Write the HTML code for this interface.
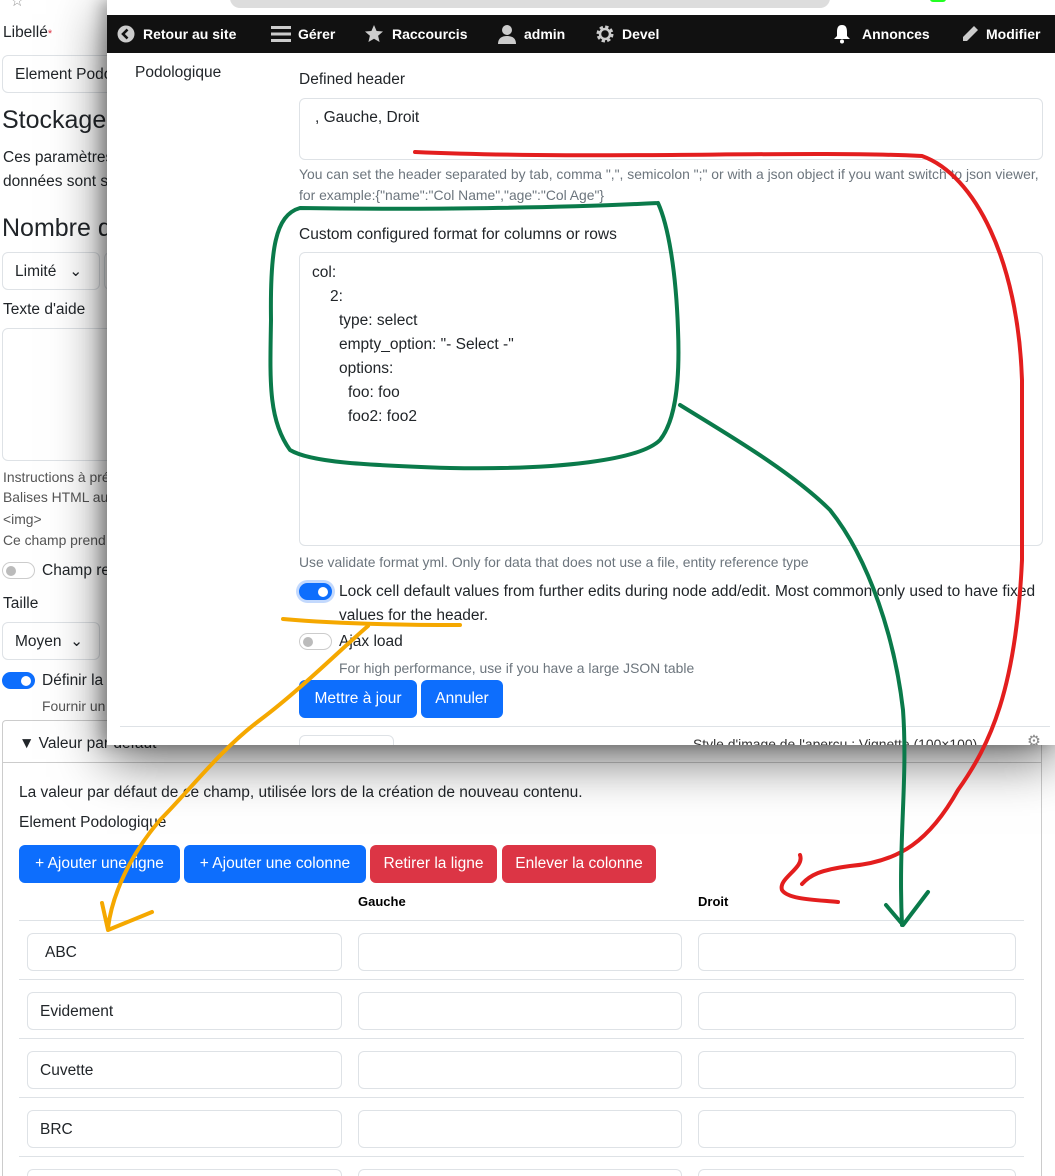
<!DOCTYPE html>
<html style="overflow:hidden;width:1055px;height:1176px"><head><meta charset="utf-8"><style>
*{box-sizing:border-box}
body{margin:0;width:1055px;height:1176px;overflow:hidden;background:#fff;font-family:"Liberation Sans",sans-serif;color:#212529;position:relative}
.t{position:absolute;white-space:nowrap;line-height:1;font-size:15.5px}
.s{font-size:13.9px;color:#6c757d}
.box{position:absolute;border:1px solid #dee2e6;border-radius:6px;background:#fff}
.lb{border-bottom:none;border-radius:6px 6px 0 0;height:7px}
.btn{position:absolute;color:#fff;border-radius:6px;font-size:15.5px;display:flex;align-items:center;justify-content:center;white-space:nowrap}
.blue{background:#0d6efd}.red{background:#dc3545}
.tg{position:absolute;width:33px;height:17px;border-radius:9px;border:1px solid #ccc;background:#fff}
.tg::after{content:"";position:absolute;left:3px;top:3px;width:10px;height:10px;border-radius:50%;background:#bbb}
.tg.on{background:#0d6efd;border-color:#0d6efd}
.tg.on::after{left:auto;right:3px;background:#fff}
.hr{position:absolute;height:1px;background:#dee2e6}
#ov{position:absolute;left:107px;top:0;width:948px;height:745px;background:#fff;box-shadow:0 14px 50px rgba(0,0,0,.6),-6px 0 14px rgba(0,0,0,.25);overflow:hidden}
.tb{position:absolute;top:15px;height:38px;left:0;right:0;background:#111}
.tb span{position:absolute;top:12px;color:#fff;font-weight:bold;font-size:14px;line-height:1;white-space:nowrap}
</style></head><body>
<div class="t" style="left:10px;top:-6px;color:#999;font-size:16px">☆</div>
<div class="t" style="left:3px;top:25px">Libellé<span style="color:#dc3545;font-size:11px">*</span></div>
<div class="box" style="left:2px;top:55px;width:140px;height:38px"></div>
<div class="t" style="left:15px;top:67px">Element Podo</div>
<div class="t" style="left:2px;top:108px;font-size:25px">Stockage c</div>
<div class="t" style="left:3px;top:150px">Ces paramètres</div>
<div class="t" style="left:3px;top:174px">données sont s</div>
<div class="t" style="left:2px;top:216px;font-size:25px">Nombre d</div>
<div class="box" style="left:2px;top:252px;width:98px;height:38px"></div>
<div class="t" style="left:15px;top:264px">Limité &nbsp;&nbsp;⌄</div>
<div class="box" style="left:104px;top:252px;width:20px;height:38px"></div>
<div class="t" style="left:3px;top:302px">Texte d'aide</div>
<div class="box" style="left:2px;top:328px;width:140px;height:133px"></div>
<div class="t s" style="left:3px;top:471px;color:#555">Instructions à pré</div>
<div class="t s" style="left:3px;top:491px;color:#555">Balises HTML aut</div>
<div class="t s" style="left:3px;top:513px;color:#555">&lt;img&gt;</div>
<div class="t s" style="left:3px;top:534px;color:#555">Ce champ prend</div>
<div class="tg" style="left:2px;top:562px"></div>
<div class="t" style="left:42px;top:563px">Champ re</div>
<div class="t" style="left:3px;top:596px">Taille</div>
<div class="box" style="left:2px;top:622px;width:98px;height:38px"></div>
<div class="t" style="left:15px;top:634px">Moyen &nbsp;⌄</div>
<div class="tg on" style="left:2px;top:672px"></div>
<div class="t" style="left:42px;top:673px">Définir la</div>
<div class="t s" style="left:42px;top:700px;color:#555">Fournir un</div>
<div style="position:absolute;left:2px;top:720px;width:1040px;height:456px;border:1px solid #ccc;border-bottom:none;border-radius:4px 4px 0 0"></div>
<div class="hr" style="left:3px;top:762px;width:1038px;background:#ccc"></div>
<div class="t" style="left:19px;top:736px">▼ Valeur par défaut</div>
<div class="t" style="left:19px;top:785px">La valeur par défaut de ce champ, utilisée lors de la création de nouveau contenu.</div>
<div class="t" style="left:19px;top:815px">Element Podologique</div>
<div class="btn blue" style="left:19px;top:845px;width:161px;height:38px">+ Ajouter une ligne</div>
<div class="btn blue" style="left:184px;top:845px;width:182px;height:38px">+ Ajouter une colonne</div>
<div class="btn red" style="left:370px;top:845px;width:127px;height:38px">Retirer la ligne</div>
<div class="btn red" style="left:502px;top:845px;width:154px;height:38px">Enlever la colonne</div>
<div class="t" style="left:358px;top:895px;font-size:13px;font-weight:bold;color:#000">Gauche</div>
<div class="t" style="left:698px;top:895px;font-size:13px;font-weight:bold;color:#000">Droit</div>
<div class="hr" style="left:19px;top:920px;width:1005px"></div>
<div class="box" style="left:27px;top:933px;width:315px;height:38px"></div><div class="box" style="left:358px;top:933px;width:324px;height:38px"></div><div class="box" style="left:698px;top:933px;width:318px;height:38px"></div>
<div class="t" style="left:45px;top:945px">ABC</div>
<div class="hr" style="left:19px;top:979px;width:1005px"></div>
<div class="box" style="left:27px;top:992px;width:315px;height:38px"></div><div class="box" style="left:358px;top:992px;width:324px;height:38px"></div><div class="box" style="left:698px;top:992px;width:318px;height:38px"></div>
<div class="t" style="left:40px;top:1004px">Evidement</div>
<div class="hr" style="left:19px;top:1038px;width:1005px"></div>
<div class="box" style="left:27px;top:1051px;width:315px;height:38px"></div><div class="box" style="left:358px;top:1051px;width:324px;height:38px"></div><div class="box" style="left:698px;top:1051px;width:318px;height:38px"></div>
<div class="t" style="left:40px;top:1063px">Cuvette</div>
<div class="hr" style="left:19px;top:1097px;width:1005px"></div>
<div class="box" style="left:27px;top:1110px;width:315px;height:38px"></div><div class="box" style="left:358px;top:1110px;width:324px;height:38px"></div><div class="box" style="left:698px;top:1110px;width:318px;height:38px"></div>
<div class="t" style="left:40px;top:1122px">BRC</div>
<div class="hr" style="left:19px;top:1156px;width:1005px"></div>
<div class="box lb" style="left:27px;top:1169px;width:315px"></div><div class="box lb" style="left:358px;top:1169px;width:324px"></div><div class="box lb" style="left:698px;top:1169px;width:318px"></div>

<div id="ov">
<div style="position:absolute;left:123px;top:-12px;width:600px;height:20px;border-radius:10px;background:#ddd"></div>
<div style="position:absolute;left:823px;top:-4px;width:16px;height:6px;border-radius:3px;background:#2f2"></div>
<div class="tb">
<svg style="position:absolute;left:10px;top:10px" width="18" height="18" viewBox="0 0 18 18"><circle cx="9" cy="9" r="8.5" fill="#ccc"/><path d="M10.5 4.5L6 9l4.5 4.5" stroke="#111" stroke-width="2.6" fill="none"/></svg>
<span style="left:36px">Retour au site</span>
<svg style="position:absolute;left:164px;top:10px" width="20" height="18"><rect y="1" width="20" height="3" fill="#ccc"/><rect y="7.5" width="20" height="3" fill="#ccc"/><rect y="14" width="20" height="3" fill="#ccc"/></svg>
<span style="left:191px">Gérer</span>
<svg style="position:absolute;left:257px;top:9px" width="20" height="20" viewBox="0 0 20 20"><path d="M10 1l2.6 6 6.4.5-4.9 4.2 1.5 6.3L10 14.7 4.4 18l1.5-6.3L1 7.5l6.4-.5z" fill="#ccc"/></svg>
<span style="left:285px">Raccourcis</span>
<svg style="position:absolute;left:390px;top:9px" width="20" height="20" viewBox="0 0 20 20"><circle cx="10" cy="6" r="5" fill="#ccc"/><path d="M1 20c0-6 4-8 9-8s9 2 9 8z" fill="#ccc"/></svg>
<span style="left:417px">admin</span>
<svg style="position:absolute;left:488px;top:9px" width="20" height="20" viewBox="0 0 20 20"><circle cx="10" cy="10" r="6.5" fill="none" stroke="#ccc" stroke-width="4" stroke-dasharray="3 2.1"/><circle cx="10" cy="10" r="5" fill="none" stroke="#ccc" stroke-width="2.5"/></svg>
<span style="left:515px">Devel</span>
<svg style="position:absolute;left:726px;top:9px" width="18" height="20" viewBox="0 0 18 20"><path d="M9 1c4 0 5 3 5 7v4l3 3H1l3-3V8c0-4 1-7 5-7z" fill="#fff"/><circle cx="9" cy="17.5" r="2" fill="#fff"/></svg>
<span style="left:755px">Annonces</span>
<svg style="position:absolute;left:853px;top:9px" width="20" height="20" viewBox="0 0 20 20"><path d="M14 2l4 4L7 17H3v-4z" fill="#ccc"/></svg>
<span style="left:879px">Modifier</span>
</div>
<div class="t" style="left:28px;top:65px">Podologique</div>
<div class="t" style="left:192px;top:72px">Defined header</div>
<div class="box" style="left:192px;top:98px;width:744px;height:62px"></div>
<div class="t" style="left:208px;top:110px">, Gauche, Droit</div>
<div class="t s" style="left:192px;top:168px">You can set the header separated by tab, comma ",", semicolon ";" or with a json object if you want switch to json viewer,</div>
<div class="t s" style="left:192px;top:189px">for example:{"name":"Col Name","age":"Col Age"}</div>
<div class="t" style="left:192px;top:227px">Custom configured format for columns or rows</div>
<div class="box" style="left:192px;top:252px;width:744px;height:294px"></div>
<div class="t" style="left:205px;top:265px">col:</div>
<div class="t" style="left:223px;top:289px">2:</div>
<div class="t" style="left:232px;top:313px">type: select</div>
<div class="t" style="left:232px;top:337px">empty_option: "- Select -"</div>
<div class="t" style="left:232px;top:361px">options:</div>
<div class="t" style="left:241px;top:385px">foo: foo</div>
<div class="t" style="left:241px;top:409px">foo2: foo2</div>
<div class="t s" style="left:192px;top:556px">Use validate format yml. Only for data that does not use a file, entity reference type</div>
<div class="tg on" style="left:192px;top:583px;box-shadow:0 0 0 3px #c3d9fd"></div>
<div class="t" style="left:232px;top:584px">Lock cell default values from further edits during node add/edit. Most common only used to have fixed</div>
<div class="t" style="left:232px;top:608px">values for the header.</div>
<div class="tg" style="left:192px;top:633px"></div>
<div class="t" style="left:232px;top:634px">Ajax load</div>
<div class="t s" style="left:232px;top:662px">For high performance, use if you have a large JSON table</div>
<div class="btn blue" style="left:192px;top:680px;width:118px;height:38px">Mettre à jour</div>
<div class="btn blue" style="left:314px;top:680px;width:82px;height:38px">Annuler</div>
<div class="hr" style="left:13px;top:726px;width:930px"></div>
<div class="box" style="left:192px;top:735px;width:95px;height:30px"></div>
<div class="t s" style="left:586px;top:738px;color:#333">Style d'image de l'aperçu : Vignette (100×100)</div>
<div class="t" style="left:920px;top:734px;color:#888">⚙</div>
</div>

<svg style="position:absolute;left:0;top:0" width="1055" height="1176" fill="none" stroke-linecap="round" stroke-linejoin="round">
<g stroke="#e31e1e" stroke-width="4">
<path d="M415,152 C600,160 800,150 922,156 C975,175 1018,260 1022,380 L1022,560 C1016,690 990,745 958,790 C930,840 900,862 850,866 C820,870 810,875 802,884"/>
<path d="M800,855 C805,868 778,878 782,890 C788,900 820,900 838,902"/>
</g>
<g stroke="#0a7a4a" stroke-width="4">
<path d="M658,203 C560,208 420,210 300,208 C275,215 270,250 271,320 C270,380 268,420 290,450 C310,462 360,465 450,468 C560,470 640,460 660,440 C676,420 680,380 678,330 C676,270 668,225 658,203"/>
<path d="M680,405 C720,430 790,470 830,510 C870,560 895,640 903,710 C908,780 898,840 902,925"/>
<path d="M886,905 L903,925 L928,892"/>
</g>
<g stroke="#f5a800" stroke-width="4">
<path d="M283,619 C340,624 400,625 460,625"/>
<path d="M368,626 C340,650 300,690 260,720 C220,750 190,790 160,820 C130,855 112,895 108,928"/>
<path d="M102,903 L108,930 L152,912"/>
</g>
</svg>
</body></html>
